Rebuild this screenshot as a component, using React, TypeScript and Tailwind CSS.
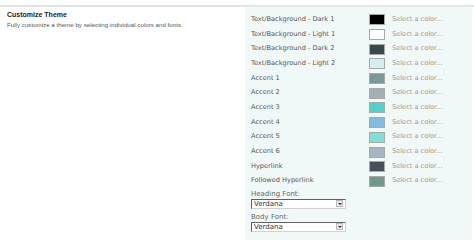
import React from "react";

const colors = [
  { label: "Text/Background - Dark 1", color: "bg-[#000000]" },
  { label: "Text/Background - Light 1", color: "bg-[#ffffff]" },
  { label: "Text/Background - Dark 2", color: "bg-[#354b4b]" },
  { label: "Text/Background - Light 2", color: "bg-[#d6eeee]" },
  { label: "Accent 1", color: "bg-[#7c9896]" },
  { label: "Accent 2", color: "bg-[#a0b0b0]" },
  { label: "Accent 3", color: "bg-[#4fd2c8]" },
  { label: "Accent 4", color: "bg-[#80bde0]" },
  { label: "Accent 5", color: "bg-[#80e0d8]" },
  { label: "Accent 6", color: "bg-[#a4b6c4]" },
  { label: "Hyperlink", color: "bg-[#4a4e5a]" },
  { label: "Followed Hyperlink", color: "bg-[#6e9a8c]" },
];

function FontSelect({ label }: { label: string }) {
  return (
    <div className="flex flex-col">
      <span className="text-[7px] leading-[9px] text-[#666]">{label}</span>
      <div className="flex items-center w-[95px] h-[10px] bg-white border-t border-l border-[#606060] border-r border-b border-r-[#d0d0d0] border-b-[#d0d0d0]">
        <span className="flex-1 pl-[2px] text-[7px] leading-[8px] text-[#333]">Verdana</span>
        <span className="flex items-center justify-center w-[7px] h-[7px] mr-[2px] bg-[#e8e8e8] border border-[#b8b8b8]">
          <svg width="4" height="2" viewBox="0 0 4 2">
            <path d="M0 0 L4 0 L2 2 Z" fill="#333" />
          </svg>
        </span>
      </div>
    </div>
  );
}

export default function App() {
  return (
    <div
      className="w-[474px] h-[244px] bg-white pt-[5px]"
      style={{ fontFamily: '"DejaVu Sans", Verdana, sans-serif' }}
    >
      <div className="border-t-2 border-[#e4e4e4] flex h-[237px]">
        <div className="w-[245px] pl-[7px] pt-[3px]">
          <div
            className="text-[7px] leading-[10px] font-bold text-[#222]"
            style={{ fontFamily: '"Liberation Sans", Tahoma, sans-serif' }}
          >
            Customize Theme
          </div>
          <div
            className="text-[6.2px] leading-[9px] text-[#555]"
            style={{ fontFamily: '"Liberation Sans", Tahoma, sans-serif' }}
          >
            Fully customize a theme by selecting individual colors and fonts.
          </div>
        </div>
        <div className="flex-1 mr-[2px] mb-[2px] bg-[#f1f8f8] pl-[6px] pt-[5.5px]">
          {colors.map((c) => (
            <div key={c.label} className="flex items-center h-[14.7px]">
              <span className="w-[118px] text-[6.6px] text-[#555] whitespace-nowrap">{c.label}</span>
              <span className={`w-[16px] h-[11px] border border-[#a8a8a8] ${c.color}`} />
              <span className="ml-[7px] text-[6.6px] text-[#999] whitespace-nowrap">Select a color...</span>
            </div>
          ))}
          <div className="flex flex-col gap-[4px] mt-[1px]">
            <FontSelect label="Heading Font:" />
            <FontSelect label="Body Font:" />
          </div>
        </div>
      </div>
    </div>
  );
}
